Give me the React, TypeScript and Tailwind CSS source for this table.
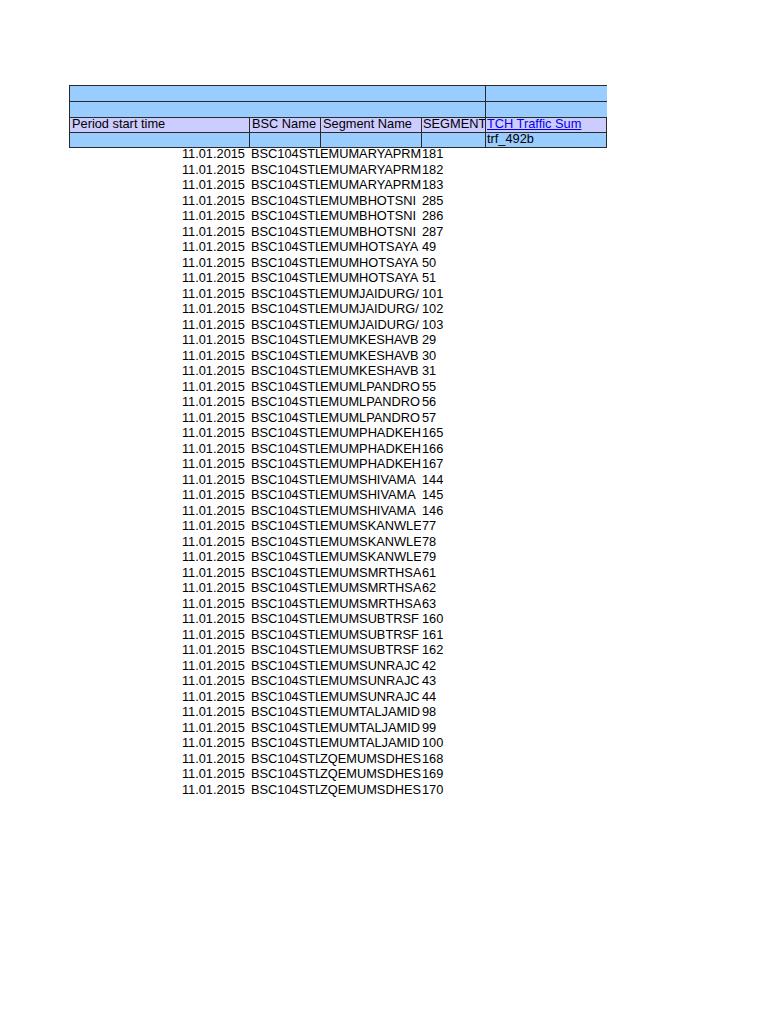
import React from 'react';

type Row = { seg: string; id: string };

// segment names as far as the sheet shows them before the next column
const rows: Row[] = [
  { seg: 'EMUMARYAPRM', id: '181' },
  { seg: 'EMUMARYAPRM', id: '182' },
  { seg: 'EMUMARYAPRM', id: '183' },
  { seg: 'EMUMBHOTSNI', id: '285' },
  { seg: 'EMUMBHOTSNI', id: '286' },
  { seg: 'EMUMBHOTSNI', id: '287' },
  { seg: 'EMUMHOTSAYA', id: '49' },
  { seg: 'EMUMHOTSAYA', id: '50' },
  { seg: 'EMUMHOTSAYA', id: '51' },
  { seg: 'EMUMJAIDURG/', id: '101' },
  { seg: 'EMUMJAIDURG/', id: '102' },
  { seg: 'EMUMJAIDURG/', id: '103' },
  { seg: 'EMUMKESHAVB', id: '29' },
  { seg: 'EMUMKESHAVB', id: '30' },
  { seg: 'EMUMKESHAVB', id: '31' },
  { seg: 'EMUMLPANDRO', id: '55' },
  { seg: 'EMUMLPANDRO', id: '56' },
  { seg: 'EMUMLPANDRO', id: '57' },
  { seg: 'EMUMPHADKEH', id: '165' },
  { seg: 'EMUMPHADKEH', id: '166' },
  { seg: 'EMUMPHADKEH', id: '167' },
  { seg: 'EMUMSHIVAMA', id: '144' },
  { seg: 'EMUMSHIVAMA', id: '145' },
  { seg: 'EMUMSHIVAMA', id: '146' },
  { seg: 'EMUMSKANWLE', id: '77' },
  { seg: 'EMUMSKANWLE', id: '78' },
  { seg: 'EMUMSKANWLE', id: '79' },
  { seg: 'EMUMSMRTHSA', id: '61' },
  { seg: 'EMUMSMRTHSA', id: '62' },
  { seg: 'EMUMSMRTHSA', id: '63' },
  { seg: 'EMUMSUBTRSF', id: '160' },
  { seg: 'EMUMSUBTRSF', id: '161' },
  { seg: 'EMUMSUBTRSF', id: '162' },
  { seg: 'EMUMSUNRAJC', id: '42' },
  { seg: 'EMUMSUNRAJC', id: '43' },
  { seg: 'EMUMSUNRAJC', id: '44' },
  { seg: 'EMUMTALJAMID', id: '98' },
  { seg: 'EMUMTALJAMID', id: '99' },
  { seg: 'EMUMTALJAMID', id: '100' },
  { seg: 'ZQEMUMSDHES', id: '168' },
  { seg: 'ZQEMUMSDHES', id: '169' },
  { seg: 'ZQEMUMSDHES', id: '170' },
];

const line = 'border-[#2a2a2a]';

export default function App() {
  return (
    <div
      className="min-h-screen bg-white pt-[85px] pl-[69px] text-[12.8px] text-black"
      style={{ fontFamily: '"Liberation Sans", Arial, sans-serif' }}
    >
      {/* header block */}
      <div className={`w-[538px] border-t border-l ${line}`}>
        {[0, 1].map((i) => (
          <div key={i} className={`flex h-[16px] border-b ${line}`}>
            <div className={`w-[416px] bg-[#99ccff] border-r ${line}`} />
            <div className="w-[121px] bg-[#99ccff]" />
          </div>
        ))}
        <div className={`flex h-[15px] border-b ${line} bg-[#ccccff] leading-[12px] whitespace-nowrap`}>
          <div className={`w-[180px] border-r ${line} pl-[2px]`}>Period start time</div>
          <div className={`w-[71px] border-r ${line} pl-[2px]`}>BSC Name</div>
          <div className={`w-[101px] border-r ${line} pl-[2px]`}>Segment Name</div>
          <div className={`w-[64px] border-r ${line} pl-[1px] overflow-x-clip`}>SEGMENT</div>
          <div className={`w-[121px] border-r ${line} pl-[1px]`}>
            <span className="text-[#0000ee] underline">TCH Traffic Sum</span>
          </div>
        </div>
        <div className={`flex h-[15px] border-b ${line} bg-[#99ccff] leading-[12px] whitespace-nowrap`}>
          <div className={`w-[180px] border-r ${line}`} />
          <div className={`w-[71px] border-r ${line}`} />
          <div className={`w-[101px] border-r ${line}`} />
          <div className={`w-[64px] border-r ${line}`} />
          <div className={`w-[121px] border-r ${line} pl-[1px]`}>trf_492b</div>
        </div>
      </div>

      {/* data rows */}
      <div className="-mt-[2px]">
        {rows.map((r, i) => (
          <div key={i} className="flex h-[15.5px] leading-[15.5px] whitespace-nowrap">
            <div className="w-[180px] pr-[4px] text-right">11.01.2015</div>
            <div className="w-[71px] pl-[2px] overflow-x-clip">BSC104STL</div>
            <div className="w-[101px] overflow-x-clip">{r.seg}</div>
            <div className="w-[64px] pl-[1px]">{r.id}</div>
          </div>
        ))}
      </div>
    </div>
  );
}
